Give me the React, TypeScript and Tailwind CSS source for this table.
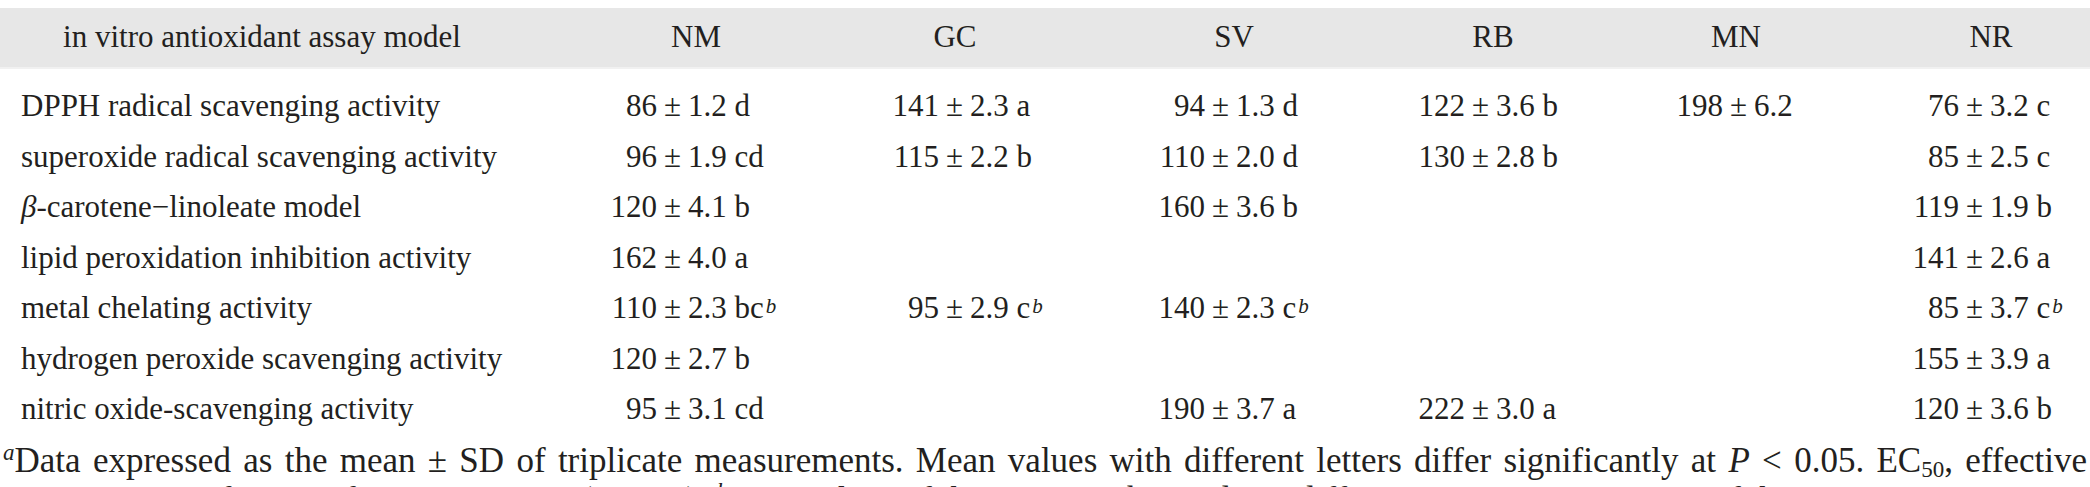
const serif = "font-['Liberation_Serif','Times_New_Roman',serif]";

type Cell = { n: string; r: string; sup?: boolean } | null;

const rows: { label: React.ReactNode; cells: Cell[] }[] = [
  {
    label: "DPPH radical scavenging activity",
    cells: [
      { n: "86", r: "1.2 d" },
      { n: "141", r: "2.3 a" },
      { n: "94", r: "1.3 d" },
      { n: "122", r: "3.6 b" },
      { n: "198", r: "6.2" },
      { n: "76", r: "3.2 c" },
    ],
  },
  {
    label: "superoxide radical scavenging activity",
    cells: [
      { n: "96", r: "1.9 cd" },
      { n: "115", r: "2.2 b" },
      { n: "110", r: "2.0 d" },
      { n: "130", r: "2.8 b" },
      null,
      { n: "85", r: "2.5 c" },
    ],
  },
  {
    label: (
      <>
        <i>β</i>-carotene−linoleate model
      </>
    ),
    cells: [{ n: "120", r: "4.1 b" }, null, { n: "160", r: "3.6 b" }, null, null, { n: "119", r: "1.9 b" }],
  },
  {
    label: "lipid peroxidation inhibition activity",
    cells: [{ n: "162", r: "4.0 a" }, null, null, null, null, { n: "141", r: "2.6 a" }],
  },
  {
    label: "metal chelating activity",
    cells: [
      { n: "110", r: "2.3 bc", sup: true },
      { n: "95", r: "2.9 c", sup: true },
      { n: "140", r: "2.3 c", sup: true },
      null,
      null,
      { n: "85", r: "3.7 c", sup: true },
    ],
  },
  {
    label: "hydrogen peroxide scavenging activity",
    cells: [{ n: "120", r: "2.7 b" }, null, null, null, null, { n: "155", r: "3.9 a" }],
  },
  {
    label: "nitric oxide-scavenging activity",
    cells: [{ n: "95", r: "3.1 cd" }, null, { n: "190", r: "3.7 a" }, { n: "222", r: "3.0 a" }, null, { n: "120", r: "3.6 b" }],
  },
];

function Value({ cell }: { cell: Cell }) {
  if (!cell) return <div />;
  return (
    <div className="flex whitespace-pre">
      <span className="w-[60px] text-right">{cell.n}</span>
      <span className="ml-[7px] mr-[7px]">±</span>
      <span>
        {cell.r}
        {cell.sup && <sup className="italic text-[21px] ml-[2px] relative -top-[5px]">b</sup>}
      </span>
    </div>
  );
}

export default function App() {
  return (
    <div className={`${serif} h-[487px] w-[2090px] overflow-hidden bg-white text-[#231f20] pt-[8px]`}>
      <div className="flex h-[61px] items-center bg-[#e7e7e7] text-[31px] border-b-2 border-[#f1f1f1]">
        <div className="w-[524px] text-center">in vitro antioxidant assay model</div>
        <div className="w-[344px] text-center">NM</div>
        <div className="w-[174px] text-center">GC</div>
        <div className="w-[384px] text-center">SV</div>
        <div className="w-[134px] text-center">RB</div>
        <div className="w-[352px] text-center">MN</div>
        <div className="w-[158px] text-center">NR</div>
      </div>

      <div className="grid grid-cols-[597px_282px_266px_260px_258px_236px_191px] pt-[12px] text-[31px] leading-[50.5px]">
        {rows.map((row, i) => (
          <div key={i} className="contents">
            <div className="pl-[21px]">{row.label}</div>
            {row.cells.map((c, j) => (
              <Value key={j} cell={c} />
            ))}
          </div>
        ))}
      </div>

      <p className="mt-[6px] px-[3px] text-[35px] leading-[39px] text-justify">
        <sup className="italic text-[23px]">a</sup>
        Data expressed as the mean ± SD of triplicate measurements. Mean values with different letters differ
        significantly at <i>P</i> &lt; 0.05. EC<sub className="text-[23px]">50</sub>, effective concentration of
        extract for 50% activity (μg/mL); <sup className="italic text-[23px]">b</sup>EC
        <sub className="text-[23px]">50</sub> values of the extracts obtained at a different concentration range of the
        assay.
      </p>
    </div>
  );
}
